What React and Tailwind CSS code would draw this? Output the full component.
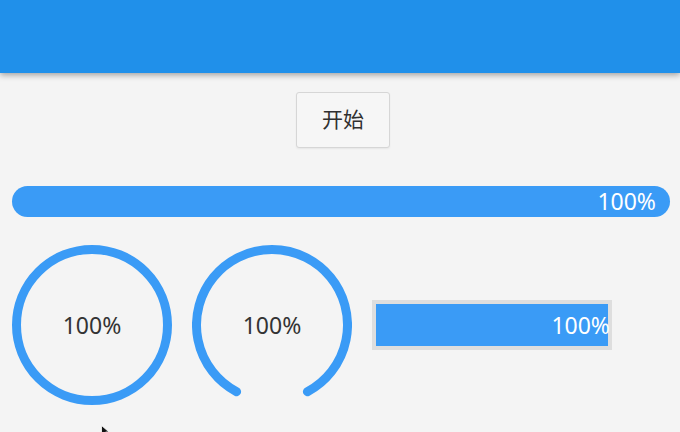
export default function App() {
  const font = { fontFamily: '"Noto Sans", "Noto Sans CJK SC", sans-serif' };

  return (
    <div
      className="relative w-[680px] h-[432px] overflow-hidden bg-[#f4f4f4]"
      style={font}
    >
      {/* App bar */}
      <div className="h-[73px] bg-[#2090ea] shadow-[0_2px_6px_rgba(0,0,0,0.35)]" />

      <div className="flex flex-col items-center">
        <button className="mt-[19px] ml-[6px] w-[94px] h-[56px] rounded-[3px] border border-[#d6d6d6] bg-[#f6f6f6] text-[21px] text-[#303030] shadow-[0_1px_2px_rgba(0,0,0,0.06)]">
          开始
        </button>
      </div>

      {/* Linear progress */}
      <div className="ml-[12px] mr-[10px] mt-[38px] h-[31px] rounded-full bg-[#3a9bf6] flex items-center justify-end pr-[14px]">
        <span className="text-[23px] text-white leading-none">100%</span>
      </div>

      {/* Bottom row */}
      <div className="flex items-center gap-[20px] mx-[12px] mt-[28px]">
        <div className="relative w-[160px] h-[160px] flex items-center justify-center">
          <svg className="absolute inset-0" width="160" height="160" viewBox="0 0 160 160">
            <circle cx="80" cy="80" r="75.5" fill="none" stroke="#3a9bf6" strokeWidth="9" />
          </svg>
          <span className="relative text-[23px] text-[#333]">100%</span>
        </div>

        <div className="relative w-[160px] h-[160px] flex items-center justify-center">
          <svg className="absolute inset-0" width="160" height="160" viewBox="0 0 160 160">
            <path
              d="M 44.6 146.7 A 75.5 75.5 0 1 1 115.4 146.7"
              fill="none"
              stroke="#3a9bf6"
              strokeWidth="9"
              strokeLinecap="round"
            />
          </svg>
          <span className="relative text-[23px] text-[#333]">100%</span>
        </div>

        <div className="w-[240px] h-[50px] border-[4px] border-[#dedede] bg-[#dedede]">
          <div className="h-full bg-[#3a9bf6] flex items-center justify-end">
            <span className="text-[23px] text-white leading-none mr-[-2px]">100%</span>
          </div>
        </div>
      </div>

      {/* mouse cursor */}
      <svg className="absolute left-[101px] top-[425px]" width="10" height="12" viewBox="0 0 10 12">
        <path d="M0.5 0.5 L0.5 10 L3 7.5 L5 11.5 L6.5 10.8 L4.6 7 L8 7 Z" fill="#111" stroke="#fff" strokeWidth="0.8" />
      </svg>
    </div>
  );
}
